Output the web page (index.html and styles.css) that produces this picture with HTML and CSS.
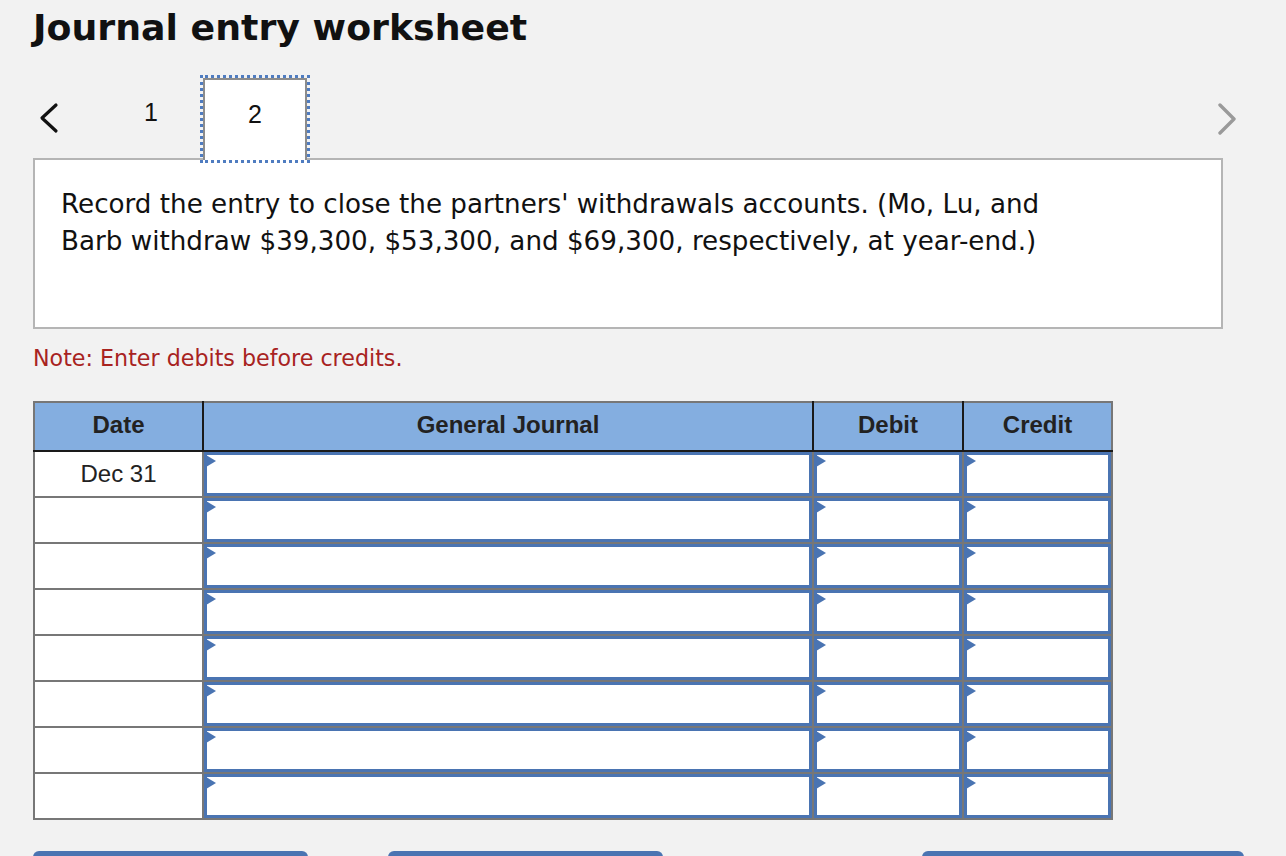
FILE: index.html
```html
<!DOCTYPE html>
<html lang="en">
<head>
  <meta charset="UTF-8">
  <title>Journal entry worksheet</title>
  <link rel="stylesheet" href="styles.css">
</head>
<body>
  <div class="page">
    <h1 class="title">Journal entry worksheet</h1>

    <div class="steps">
      <button class="nav-btn prev" aria-label="Previous">
        <svg width="24" height="34" viewBox="0 0 24 34"><polyline points="20,4 6,17 20,30" fill="none" stroke="#111" stroke-width="3.2" stroke-linecap="round" stroke-linejoin="round"/></svg>
      </button>
      <div class="step">1</div>
      <div class="step active">2</div>
      <div class="spacer"></div>
      <button class="nav-btn next" aria-label="Next">
        <svg width="24" height="34" viewBox="0 0 24 34"><polyline points="6,4 20,18 6,32" fill="none" stroke="#9a9a9a" stroke-width="3.4" stroke-linecap="round" stroke-linejoin="round"/></svg>
      </button>
    </div>

    <div class="question">
      <p>Record the entry to close the partners' withdrawals accounts. (Mo, Lu, and<br>
      Barb withdraw $39,300, $53,300, and $69,300, respectively, at year-end.)</p>
    </div>

    <p class="note">Note: Enter debits before credits.</p>

    <table class="journal">
      <colgroup>
        <col class="c-date">
        <col class="c-account">
        <col class="c-debit">
        <col class="c-credit">
      </colgroup>
      <thead>
        <tr>
          <th>Date</th>
          <th>General Journal</th>
          <th>Debit</th>
          <th>Credit</th>
        </tr>
      </thead>
      <tbody>
        <tr><td class="date">Dec 31</td><td><div class="field"></div></td><td><div class="field"></div></td><td><div class="field"></div></td></tr>
        <tr><td class="date"></td><td><div class="field"></div></td><td><div class="field"></div></td><td><div class="field"></div></td></tr>
        <tr><td class="date"></td><td><div class="field"></div></td><td><div class="field"></div></td><td><div class="field"></div></td></tr>
        <tr><td class="date"></td><td><div class="field"></div></td><td><div class="field"></div></td><td><div class="field"></div></td></tr>
        <tr><td class="date"></td><td><div class="field"></div></td><td><div class="field"></div></td><td><div class="field"></div></td></tr>
        <tr><td class="date"></td><td><div class="field"></div></td><td><div class="field"></div></td><td><div class="field"></div></td></tr>
        <tr><td class="date"></td><td><div class="field"></div></td><td><div class="field"></div></td><td><div class="field"></div></td></tr>
        <tr><td class="date"></td><td><div class="field"></div></td><td><div class="field"></div></td><td><div class="field"></div></td></tr>
      </tbody>
    </table>

    <div class="actions">
      <button class="btn" aria-label="Record entry"></button>
      <button class="btn" aria-label="Clear entry"></button>
      <button class="btn wide" aria-label="View general journal"></button>
    </div>
  </div>
</body>
</html>
```

FILE: styles.css
```css
body {
  margin: 0;
  background: #f2f2f2;
  font-family: "DejaVu Sans", Verdana, sans-serif;
  color: #111;
}

.page {
  width: 1220px;
  padding: 7px 0 0 33px;
}

.title {
  margin: 0;
  font-size: 36.3px;
  line-height: 42px;
  font-weight: bold;
  color: #111;
}

.steps {
  display: flex;
  height: 80px;
  margin-top: 29px;
}

.nav-btn {
  border: 0;
  background: none;
  padding: 0;
  display: flex;
  align-items: center;
  cursor: pointer;
}

.prev {
  width: 66px;
  padding-left: 3px;
}

.next {
  width: 39px;
}

.step {
  width: 104px;
  display: flex;
  align-items: center;
  justify-content: center;
  font-family: "Liberation Sans", Arial, sans-serif;
  font-size: 25px;
  padding-bottom: 11px;
  box-sizing: border-box;
}

.step.active {
  position: relative;
  z-index: 1;
  background: #fff;
  border: 2px solid #8c8c8c;
  border-bottom: 0;
  margin-bottom: -2px;
  outline: 3px dotted #4f7cc0;
  outline-offset: 0;
}

.spacer {
  flex: 1;
}

.question {
  background: #fff;
  border: 2px solid #b5b5b5;
  box-sizing: border-box;
  width: 1190px;
  height: 171px;
  padding: 26px 26px;
}

.question p {
  margin: 0;
  font-size: 26.2px;
  line-height: 37px;
}

.note {
  margin: 15px 0 0;
  font-size: 22.2px;
  line-height: 28px;
  color: #a8231f;
}

.journal {
  margin-top: 29px;
  width: 1078px;
  table-layout: fixed;
  border-collapse: collapse;
  font-family: "Liberation Sans", Arial, sans-serif;
}

.c-date { width: 169px; }
.c-account { width: 610px; }
.c-debit { width: 150px; }
.c-credit { width: 149px; }

.journal th {
  height: 44px;
  background: #84aee0;
  color: #222;
  font-size: 24px;
  font-weight: bold;
  border: 2px solid #777;
  border-right-color: #1a1a1a;
  border-bottom-color: #1a1a1a;
  padding: 0 0 3px;
}

.journal th:last-child {
  border-right-color: #777;
}

.journal td {
  height: 44px;
  padding: 0;
  border: 2px solid #777;
  background: #fff;
  vertical-align: top;
}

.journal td.date {
  text-align: center;
  font-size: 24px;
  line-height: 44px;
  color: #222;
}

.field {
  position: relative;
  height: 44px;
  box-sizing: border-box;
  border: 3px solid #4a74b2;
  background: #fff;
}

.field::before {
  content: "";
  position: absolute;
  left: -1px;
  top: 0;
  border-left: 10px solid #4a74b2;
  border-top: 6px solid transparent;
  border-bottom: 6px solid transparent;
}

.actions {
  display: flex;
  margin-top: 31px;
}

.btn {
  width: 275px;
  height: 48px;
  margin-right: 80px;
  border: 0;
  border-radius: 6px 6px 0 0;
  background: #4a74b2;
}

.btn.wide {
  width: 322px;
  margin-left: 179px;
  margin-right: 0;
}
```
